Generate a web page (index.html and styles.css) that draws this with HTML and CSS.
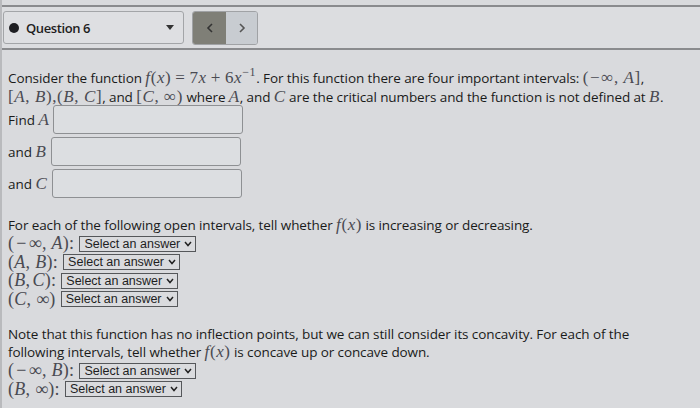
FILE: index.html
```html
<!DOCTYPE html>
<html>
<head>
<meta charset="utf-8">
<link rel="stylesheet" href="styles.css">
</head>
<body>
<div class="page">
  <div class="header">
    <div class="qselect">
      <span class="dot"></span>
      <span class="qlabel">Question 6</span>
      <span class="caret"></span>
    </div>
    <div class="nav">
      <span class="navbtn prev"><svg width="8" height="10" viewBox="0 0 8 10"><path d="M6 1 L2 5 L6 9" fill="none" stroke="#333" stroke-width="1.6"/></svg></span>
      <span class="navbtn next"><svg width="8" height="10" viewBox="0 0 8 10"><path d="M2 1 L6 5 L2 9" fill="none" stroke="#555" stroke-width="1.6"/></svg></span>
    </div>
  </div>

  <div class="content">
    <p class="para">Consider the function <span class="m"><i>f</i>(<i>x</i>)<span class="op">=</span>7<i>x</i><span class="op">+</span>6<i>x</i><sup>−1</sup></span>. For this function there are four important intervals: <span class="m">(<span class="mn">−</span>∞, <i>A</i>]</span>,<br><span class="m">[<i>A</i>, <i>B</i>),(<i>B</i>, <i>C</i>]</span>, and <span class="m">[<i>C</i>, ∞)</span> where <span class="m"><i>A</i></span>, and <span class="m"><i>C</i></span> are the critical numbers and the function is not defined at <span class="m"><i>B</i></span>.</p>

    <div class="field f1"><span class="flabel">Find <span class="m"><i>A</i></span></span><span class="input"></span></div>
    <div class="field f2"><span class="flabel">and <span class="m"><i>B</i></span></span><span class="input"></span></div>
    <div class="field f3"><span class="flabel">and <span class="m"><i>C</i></span></span><span class="input"></span></div>

    <p class="para p2">For each of the following open intervals, tell whether <span class="m"><i>f</i>(<i>x</i>)</span> is increasing or decreasing.</p>
    <div class="rows">
      <div class="row"><span class="mi">(<span class="mn">−</span>∞, <i>A</i>):</span><span class="sel">Select an answer<svg class="chev" width="8" height="6" viewBox="0 0 8 6"><path d="M1 1 L4 4.5 L7 1" fill="none" stroke="#222" stroke-width="1.5"/></svg></span></div>
      <div class="row"><span class="mi">(<i>A</i>, <i>B</i>):</span><span class="sel">Select an answer<svg class="chev" width="8" height="6" viewBox="0 0 8 6"><path d="M1 1 L4 4.5 L7 1" fill="none" stroke="#222" stroke-width="1.5"/></svg></span></div>
      <div class="row"><span class="mi">(<i>B</i>,<span class="thin"></span><i>C</i>):</span><span class="sel">Select an answer<svg class="chev" width="8" height="6" viewBox="0 0 8 6"><path d="M1 1 L4 4.5 L7 1" fill="none" stroke="#222" stroke-width="1.5"/></svg></span></div>
      <div class="row"><span class="mi">(<i>C</i>, ∞)</span><span class="sel">Select an answer<svg class="chev" width="8" height="6" viewBox="0 0 8 6"><path d="M1 1 L4 4.5 L7 1" fill="none" stroke="#222" stroke-width="1.5"/></svg></span></div>
    </div>

    <p class="para p3">Note that this function has no inflection points, but we can still consider its concavity. For each of the<br>following intervals, tell whether <span class="m"><i>f</i>(<i>x</i>)</span> is concave up or concave down.</p>
    <div class="rows">
      <div class="row"><span class="mi">(<span class="mn">−</span>∞, <i>B</i>):</span><span class="sel">Select an answer<svg class="chev" width="8" height="6" viewBox="0 0 8 6"><path d="M1 1 L4 4.5 L7 1" fill="none" stroke="#222" stroke-width="1.5"/></svg></span></div>
      <div class="row"><span class="mi">(<i>B</i>, ∞):</span><span class="sel">Select an answer<svg class="chev" width="8" height="6" viewBox="0 0 8 6"><path d="M1 1 L4 4.5 L7 1" fill="none" stroke="#222" stroke-width="1.5"/></svg></span></div>
    </div>
  </div>
</div>
</body>
</html>
```

FILE: styles.css
```css
html, body {
  margin: 0;
  padding: 0;
  background: #d8d9dc;
}
.page {
  width: 700px;
  height: 408px;
  overflow: hidden;
  background: #d9dadd;
  border-left: 2px solid #b9babd;
  box-sizing: border-box;
  font-family: "Open Sans", "DejaVu Sans", sans-serif;
  color: #1a1a1a;
}
.header {
  margin-top: 5px;
  height: 41px;
  border-top: 2px solid #8a8b8e;
  border-bottom: 2px solid #8a8b8e;
  background: #dcdde0;
  display: flex;
  align-items: center;
  gap: 8px;
  padding-left: 1px;
}
.qselect {
  width: 181px;
  height: 33px;
  box-sizing: border-box;
  border: 1px solid #a3a5a8;
  border-radius: 3px;
  background: #dedfe2;
  display: flex;
  align-items: center;
  padding-left: 5px;
}
.dot {
  width: 10px;
  height: 10px;
  border-radius: 50%;
  background: #1e1e22;
  margin-right: 7px;
}
.qlabel {
  font-size: 13px;
  font-weight: 600;
  letter-spacing: -0.4px;
  color: #1e1e1e;
  flex: 1;
}
.caret {
  width: 0;
  height: 0;
  border-left: 4px solid transparent;
  border-right: 4px solid transparent;
  border-top: 5px solid #333;
  margin-right: 9px;
}
.nav {
  display: flex;
  height: 32px;
  border: 1px solid #a0a2a5;
  border-radius: 3px;
  overflow: hidden;
}
.navbtn {
  width: 33px;
  display: flex;
  align-items: center;
  justify-content: center;
}
.prev { background: #7f7f77; }
.next { background: #c8ccd1; width: 31px; }

.content {
  padding-left: 6px;
}
.para {
  margin: 0;
  font-size: 13.5px;
  line-height: 18.5px;
  letter-spacing: -0.1px;
}
.content > .para:first-child {
  padding-top: 19px;
}
.m {
  font-family: "Liberation Serif", "DejaVu Serif", serif;
  font-size: 17px;
  color: #4a4a52;
  letter-spacing: 0.6px;
}
.m .op {
  margin: 0 4px;
}
.mn {
  margin: 0 1px;
}
.m sup {
  font-size: 12px;
  line-height: 0;
}
.field {
  display: flex;
  align-items: center;
  font-size: 13.5px;
}
.flabel {
  margin-right: 4px;
}
.input {
  display: inline-block;
  width: 190px;
  height: 29px;
  box-sizing: border-box;
  border: 1px solid #8e9093;
  border-radius: 3px;
  background: #dcdee1;
}
.f1 { margin-top: -1px; }
.f2 { margin-top: 3px; }
.f3 { margin-top: 3px; }
.p2 { margin-top: 18px; }
.p3 { margin-top: 16px; }
.rows {
  display: flex;
  flex-direction: column;
}
.row {
  display: flex;
  align-items: center;
  height: 18.5px;
}
.mi {
  font-family: "Liberation Serif", "DejaVu Serif", serif;
  font-size: 18px;
  letter-spacing: 0.3px;
  color: #4a4a52;
  margin-right: 5px;
}
.mi .mn {
  margin: 0 2px;
}
.thin {
  display: inline-block;
  width: 2px;
}
.sel {
  display: inline-flex;
  align-items: center;
  height: 16px;
  box-sizing: border-box;
  border: 1px solid #55575a;
  padding: 0 3px 0 4px;
  font-family: "Liberation Sans", Arial, sans-serif;
  font-size: 12.5px;
  color: #1e1e1e;
  background: #dadbde;
}
.chev {
  margin-left: 4px;
}
```
